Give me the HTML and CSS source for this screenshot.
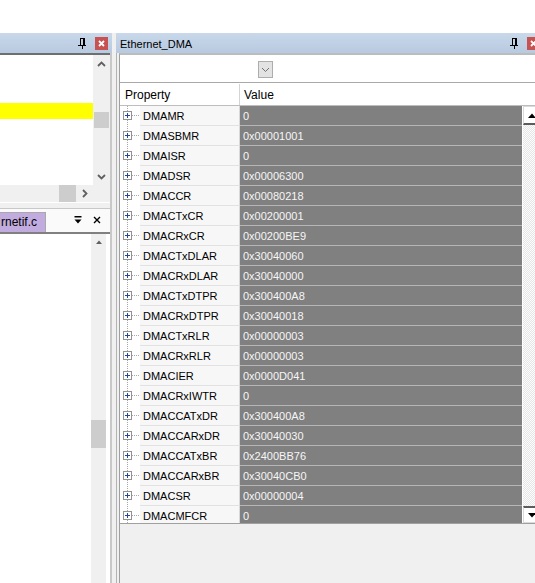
FILE: index.html
```html
<!DOCTYPE html>
<html lang="en">
<head>
  <meta charset="UTF-8" />
  <title>Ethernet_DMA</title>
  <link rel="stylesheet" href="styles.css">
</head>
<body>
  <div class="topo"></div>
  <div class="main">
    <div class="left">
      <div class="titlebar">
        <span class="fill"></span>
        <svg class="pin" width="8" height="11" viewBox="0 0 8 11"><path d="M2 0.5H6M2.5 0.5V7M5.5 0.5V7M0 7.5H8M4 8V11" stroke="#000" fill="none" shape-rendering="crispEdges"/><rect x="5" y="0" width="2" height="7" fill="#000"/></svg>
        <span class="close"><svg width="13" height="13" viewBox="0 0 13 13"><path d="M4 4L9 9M9 4L4 9" stroke="#fff" stroke-width="1.8"/></svg></span>
      </div>
      <div class="lbody">
        <div class="pane1">
          <div class="p1main">
            <div class="list"><div class="hl"></div></div>
            <div class="vscroll">
              <div class="arrow"><svg width="9" height="6" viewBox="0 0 9 6"><path d="M1 5L4.5 1.5L8 5" stroke="#606060" stroke-width="1.8" fill="none"/></svg></div>
              <div class="track"><div class="thumb v1"></div></div>
              <div class="arrow"><svg width="9" height="6" viewBox="0 0 9 6"><path d="M1 1L4.5 4.5L8 1" stroke="#606060" stroke-width="1.8" fill="none"/></svg></div>
            </div>
          </div>
          <div class="p1h">
            <div class="hscroll">
              <div class="thumb h1"></div>
              <div class="arrow"><svg width="6" height="9" viewBox="0 0 6 9"><path d="M1 1L4.5 4.5L1 8" stroke="#606060" stroke-width="1.8" fill="none"/></svg></div>
            </div>
            <div class="corner"></div>
          </div>
        </div>
        <div class="gap"></div>
        <div class="tabbar">
          <div class="tab">rnetif.c</div>
          <span class="fill"></span>
          <svg class="tabicon" width="8" height="8" viewBox="0 0 8 8"><rect x="0.5" y="0" width="7" height="1.5" fill="#000"/><path d="M0.5 3.5H7.5L4 7.5Z" fill="#000"/></svg>
          <svg class="tabicon" width="8" height="8" viewBox="0 0 8 8"><path d="M1 1L7 7M7 1L1 7" stroke="#000" stroke-width="1.4"/></svg>
        </div>
        <div class="editor">
          <div class="code"></div>
          <div class="escroll">
            <div class="earrow"><svg width="6" height="4" viewBox="0 0 6 4"><path d="M0 4L3 0.5L6 4Z" fill="#606060"/></svg></div>
            <div class="thumb e1"></div>
          </div>
        </div>
      </div>
    </div>

    <div class="split"></div>

    <div class="right">
      <div class="titlebar">
        <span class="title">Ethernet_DMA</span>
        <span class="fill"></span>
        <svg class="pin" width="8" height="11" viewBox="0 0 8 11"><path d="M2 0.5H6M2.5 0.5V7M5.5 0.5V7M0 7.5H8M4 8V11" stroke="#000" fill="none" shape-rendering="crispEdges"/><rect x="5" y="0" width="2" height="7" fill="#000"/></svg>
        <span class="close"><svg width="13" height="13" viewBox="0 0 13 13"><path d="M4 4L9 9M9 4L4 9" stroke="#fff" stroke-width="1.8"/></svg></span>
      </div>
      <div class="rbody">
        <div class="grid">
          <div class="toolbar">
            <span class="dd"><svg width="13" height="15" viewBox="0 0 13 15"><path d="M3 6L6.5 9.5L10 6" stroke="#707070" stroke-width="1" fill="none"/></svg></span>
          </div>
          <div class="header">
            <div class="hprop">Property</div>
            <div class="hval">Value</div>
          </div>
          <div class="rows-wrap">
            <div class="rows" id="rows"></div>
            <div class="gscroll">
              <div class="gbtn up"><svg width="8" height="5" viewBox="0 0 8 5"><path d="M0 5L4 0.5L8 5Z" fill="#000"/></svg></div>
              <div class="gtrack"></div>
              <div class="gbtn down"><svg width="8" height="5" viewBox="0 0 8 5"><path d="M0 0H8L4 4.5Z" fill="#000"/></svg></div>
            </div>
          </div>
          <div class="desc"></div>
        </div>
      </div>
    </div>
  </div>

  <script>
    const registros = [
      ['DMAMR', '0'],
      ['DMASBMR', '0x00001001'],
      ['DMAISR', '0'],
      ['DMADSR', '0x00006300'],
      ['DMACCR', '0x00080218'],
      ['DMACTxCR', '0x00200001'],
      ['DMACRxCR', '0x00200BE9'],
      ['DMACTxDLAR', '0x30040060'],
      ['DMACRxDLAR', '0x30040000'],
      ['DMACTxDTPR', '0x300400A8'],
      ['DMACRxDTPR', '0x30040018'],
      ['DMACTxRLR', '0x00000003'],
      ['DMACRxRLR', '0x00000003'],
      ['DMACIER', '0x0000D041'],
      ['DMACRxIWTR', '0'],
      ['DMACCATxDR', '0x300400A8'],
      ['DMACCARxDR', '0x30040030'],
      ['DMACCATxBR', '0x2400BB76'],
      ['DMACCARxBR', '0x30040CB0'],
      ['DMACSR', '0x00000004'],
      ['DMACMFCR', '0']
    ];

    const container = document.getElementById('rows');
    registros.forEach(([nome, valor]) => {
      const linha = document.createElement('div');
      linha.classList.add('row');
      linha.innerHTML =
        '<div class="gutter"><span class="plus"></span></div>' +
        '<div class="name">' + nome + '</div>' +
        '<div class="value">' + valor + '</div>';
      container.appendChild(linha);
    });
  </script>
</body>
</html>
```

FILE: styles.css
```css
* {
  margin: 0;
  padding: 0;
  box-sizing: border-box;
}

html, body {
  width: 535px;
  height: 583px;
  overflow: hidden;
}

body {
  background-color: #ffffff;
  font-family: 'Liberation Sans', Arial, sans-serif;
  font-size: 11px;
  color: #000000;
}

.topo {
  height: 33px;
}

.main {
  display: flex;
  height: 550px;
  width: 540px;
}

.fill {
  flex: 1;
}

/* barras de titulo */
.titlebar {
  height: 20px;
  display: flex;
  align-items: center;
  background: linear-gradient(#c9d8ea, #b8cae0);
}

.title {
  padding-left: 4px;
  padding-top: 1px;
  font-size: 11px;
}

.pin {
  display: block;
}

.close {
  width: 13px;
  height: 13px;
  margin-left: 9px;
  background-color: #c75252;
  display: flex;
}

.left .titlebar {
  padding-right: 4px;
}

/* painel esquerdo */
.left {
  width: 112px;
  display: flex;
  flex-direction: column;
}

.lbody {
  flex: 1;
  display: flex;
  flex-direction: column;
  border-right: 2px solid #c8c8c8;
}

.pane1 {
  height: 150px;
  border-top: 2px solid #6e6e6e;
  display: flex;
  flex-direction: column;
}

.p1main {
  height: 130px;
  display: flex;
}

.list {
  flex: 1;
  background-color: #ffffff;
}

.hl {
  margin-top: 48px;
  height: 16px;
  background-color: #ffff00;
}

.vscroll {
  width: 17px;
  background-color: #f0f0f0;
  display: flex;
  flex-direction: column;
}

.arrow {
  width: 17px;
  height: 17px;
  display: flex;
  align-items: center;
  justify-content: center;
}

.track {
  flex: 1;
  padding: 0 1px;
}

.thumb {
  background-color: #cdcdcd;
}

.v1 {
  margin-top: 40px;
  height: 16px;
}

.p1h {
  height: 18px;
  display: flex;
  border-bottom: 1px solid #ffffff;
}

.hscroll {
  flex: 1;
  background-color: #f0f0f0;
  display: flex;
  align-items: center;
  padding-left: 59px;
}

.h1 {
  width: 17px;
  height: 17px;
}

.corner {
  width: 17px;
  background-color: #f0f0f0;
}

.gap {
  height: 5px;
  background-color: #f0f0f0;
}

.tabbar {
  height: 24px;
  border-top: 1px solid #c8c8c8;
  background-color: #fafafa;
  display: flex;
  align-items: flex-end;
  padding-right: 9px;
}

.tab {
  width: 46px;
  height: 20px;
  background-color: #c2acdf;
  border-top: 1px solid #a9a9a9;
  border-right: 1px solid #a9a9a9;
  font-size: 12px;
  line-height: 19px;
  padding-left: 1px;
  white-space: nowrap;
  overflow: hidden;
}

.tabicon {
  margin-bottom: 8px;
  margin-left: 11px;
}

.editor {
  flex: 1;
  border-top: 2px solid #808080;
  display: flex;
  background-color: #ffffff;
}

.code {
  flex: 1;
}

.escroll {
  width: 15px;
  margin-right: 4px;
  background-color: #f0f0f0;
  display: flex;
  flex-direction: column;
  align-items: center;
}

.earrow {
  height: 16px;
  display: flex;
  align-items: center;
}

.e1 {
  width: 15px;
  margin-top: 170px;
  height: 28px;
}

.split {
  width: 4px;
  background-color: #f0f0f0;
}

/* painel direito */
.right {
  width: 424px;
  display: flex;
  flex-direction: column;
}

.rbody {
  flex: 1;
  background-color: #f0f0f0;
  border-left: 1px solid #b4b4b4;
  padding-left: 2px;
  display: flex;
}

.grid {
  flex: 1;
  display: flex;
  flex-direction: column;
  border-left: 1px solid #a0a0a0;
  border-top: 2px solid #bcbcbc;
}

.toolbar {
  height: 28px;
  background-color: #ffffff;
  border-bottom: 1px solid #a8a8a8;
  padding-left: 138px;
  padding-top: 6px;
}

.dd {
  display: flex;
  width: 15px;
  height: 17px;
  background-color: #e3e3e3;
  border: 1px solid #adadad;
}

.header {
  height: 23px;
  display: flex;
  background-color: #ffffff;
  border-bottom: 1px solid #bdbdbd;
  font-size: 12px;
  line-height: 22px;
  padding-top: 1px;
}

.hprop {
  width: 120px;
  padding-left: 5px;
  border-right: 1px solid #d4d4d4;
}

.hval {
  padding-left: 4px;
}

.rows-wrap {
  height: 417px;
  display: flex;
  overflow: hidden;
}

.rows {
  flex: 1;
}

.row {
  display: flex;
  height: 20px;
  line-height: 18px;
}

.gutter {
  width: 20px;
  display: flex;
  align-items: center;
  padding-left: 3px;
  padding-bottom: 1px;
  background-color: #ffffff;
  background-image:
    repeating-linear-gradient(to bottom, #a8a8a8 0 1px, transparent 1px 2px),
    repeating-linear-gradient(to right, #a8a8a8 0 1px, transparent 1px 2px);
  background-size: 1px 100%, 8px 1px;
  background-position: 7px 0, 12px 9px;
  background-repeat: no-repeat;
}

.plus {
  width: 9px;
  height: 9px;
  border: 1px solid #929292;
  background:
    linear-gradient(#24479a, #24479a) center / 5px 1px no-repeat,
    linear-gradient(#24479a, #24479a) center / 1px 5px no-repeat,
    #ffffff;
}

.name {
  width: 100px;
  padding-left: 3px;
  padding-top: 1px;
  background-color: #f7f7f7;
  border-bottom: 1px solid #e2e2e2;
  border-right: 1px solid #d8d8d8;
}

.value {
  flex: 1;
  padding-left: 3px;
  padding-top: 1px;
  background-color: #808080;
  color: #f6f6f6;
  border-bottom: 1px solid #b6b6b6;
}

.gscroll {
  width: 18px;
  border-left: 1px solid #ffffff;
  display: flex;
  flex-direction: column;
}

.gbtn {
  height: 19px;
  display: flex;
  align-items: center;
  justify-content: center;
  background-color: #ffffff;
  border: 1px solid #dadada;
}

.gbtn.up {
  border-bottom: 2px solid #5c5c5c;
}

.gbtn.down {
  height: 17px;
  border-top: 2px solid #5c5c5c;
}

.gtrack {
  flex: 1;
  background-color: #fafafa;
  background-image: repeating-conic-gradient(#e6e6e6 0 25%, #fcfcfc 0 50%);
  background-size: 2px 2px;
}

.desc {
  flex: 1;
  background-color: #f0f0f0;
  border-top: 1px solid #a0a0a0;
}
```
